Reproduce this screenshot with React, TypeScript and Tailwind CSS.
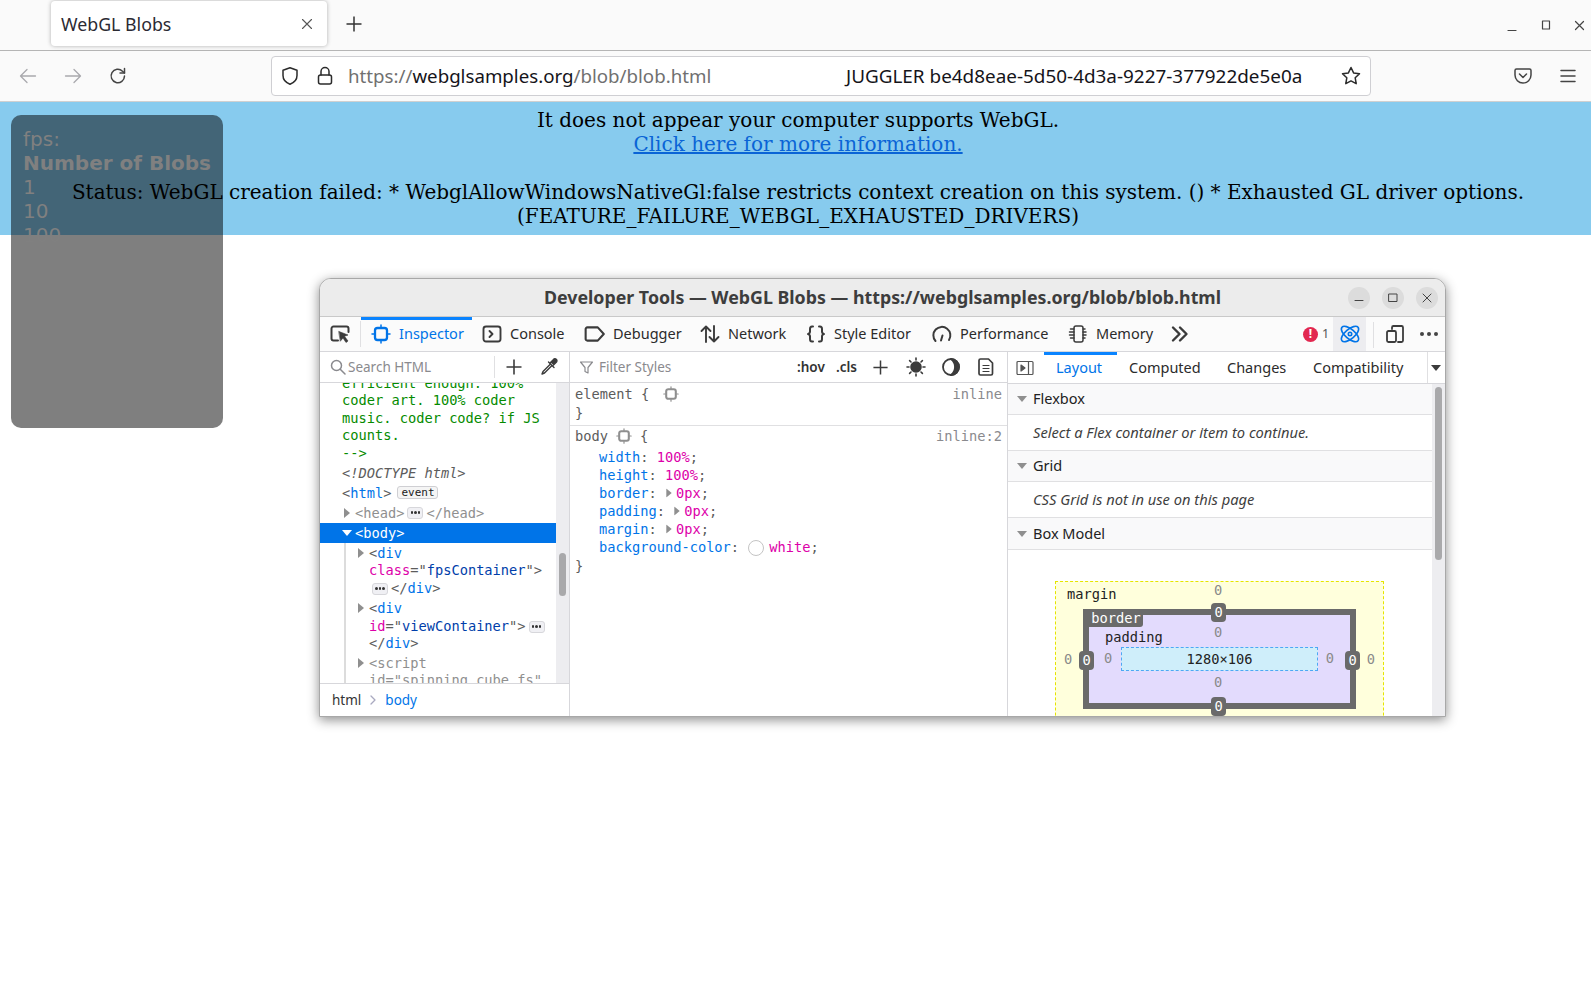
import React from "react";

const S = ({ w = 20, h = 20, vb = "0 0 20 20", children, c = "#3b3b3b", sw = 1.6, cls = "" }: any) => (
  <svg width={w} height={h} viewBox={vb} fill="none" stroke={c} strokeWidth={sw} strokeLinecap="round" strokeLinejoin="round" className={"shrink-0 " + cls}>
    {children}
  </svg>
);

const Cube = ({ c = "#0074e8", size = 20, sw = 2.3 }: any) => (
  <S w={size} h={size} c={c} sw={sw}>
    <rect x="4" y="4" width="12" height="12" rx="2.5" />
    <path d="M10 1v2M10 17v2M1 10h2M17 10h2" strokeWidth="1.5" />
  </S>
);

const Tab = ({ w, icon, label, active }: any) => (
  <div className={"flex items-center h-full pl-[10px] " + w}>
    <div className="w-5 h-5 mr-2 flex items-center justify-center shrink-0">{icon}</div>
    <span className={"text-[14.5px] whitespace-nowrap " + (active ? "text-[#0074e8]" : "text-[#2b2b2b]")}>{label}</span>
  </div>
);

const Arrow = ({ open, c = "#8f8f8f" }: any) => (
  <svg width="10" height="10" viewBox="0 0 10 10" className="shrink-0">
    {open ? <path d="M0 2h10L5 8z" fill={c} /> : <path d="M2 0v10l6-5z" fill={c} />}
  </svg>
);

const Dots = () => (
  <span className="inline-flex items-center justify-center w-[16px] h-[12px] rounded-[3px] bg-[#f0f0f4] border border-[#d7d7db] gap-[1px] align-middle mx-[3px]">
    <i className="w-[2.5px] h-[2.5px] rounded-full bg-[#333]" />
    <i className="w-[2.5px] h-[2.5px] rounded-full bg-[#333]" />
    <i className="w-[2.5px] h-[2.5px] rounded-full bg-[#333]" />
  </span>
);

const P = ({ children }: any) => <span className="text-[#5c5c5c]">{children}</span>;
const T = ({ children }: any) => <span className="text-[#0074e8]">{children}</span>;
const G = ({ children }: any) => <span className="text-[#8f8f8f]">{children}</span>;

const Line = ({ children, cls = "" }: any) => <div className={"h-[17.5px] leading-[17.5px] whitespace-nowrap " + cls}>{children}</div>;

const Comment = ["efficient enough: 100%", "coder art. 100% coder", "music. coder code? if JS", "counts."];

const Decl = ({ name, value, arrow, swatch }: any) => (
  <div className="h-[18.1px] leading-[18.1px] pl-[24px] whitespace-nowrap flex items-center">
    <T>{name}</T>
    <P>:&nbsp;</P>
    {arrow && <span className="mr-[2px] ml-[-1px] scale-[0.9]"><Arrow /></span>}
    {swatch && <span className="w-[16px] h-[16px] rounded-full border border-[#c4c4c4] bg-white mr-[5px] ml-[1px]" />}
    <span className="text-[#dd00a9]">{value}</span>
    <P>;</P>
  </div>
);

const Acc = ({ title, h = "h-[31px]" }: any) => (
  <div className={h + " bg-[#f9f9fa] border-b border-[#e0e0e2] flex items-center pl-[9px]"}>
    <Arrow open />
    <span className="ml-[6px] text-[14.5px] text-[#222]">{title}</span>
  </div>
);

const Note = ({ text }: any) => (
  <div className="h-[36px] border-b border-[#e0e0e2] flex items-center pl-[25px] italic text-[14.7px] text-[#3f3f3f]">{text}</div>
);

const Badge = ({ cls }: any) => (
  <span className={"absolute w-[15px] h-[19px] bg-[#6a6a6a] rounded-[4px] text-white flex items-center justify-center " + cls}>0</span>
);
const Num = ({ cls }: any) => <span className={"absolute text-[#8a8a8a] leading-none " + cls}>0</span>;

export default function App() {
  return (
    <div className="relative w-[1591px] h-[998px] overflow-hidden bg-white font-['Noto_Sans',sans-serif]">
      {/* tab strip */}
      <div className="h-[51px] bg-[#fafafa] border-b border-[#b5b5b5] flex items-start pl-[51px] pt-[1px]">
        <div className="w-[276px] h-[45px] bg-white rounded-[4px] shadow-[0_0_4px_rgba(0,0,0,0.3)] flex items-center pl-[10px] pr-[14px] justify-between">
          <span className="text-[17.8px] text-[#2b2a33] mt-[1px]">WebGL Blobs</span>
          <S w={12} h={12} vb="0 0 12 12" c="#555" sw={1.1}><path d="M1.5 1.5l9 9M10.5 1.5l-9 9" /></S>
        </div>
        <div className="ml-[18px] mt-[14px]">
          <S w={18} h={18} vb="0 0 18 18" c="#333" sw={1.5}><path d="M9 1.5v15M1.5 9h15" strokeLinecap="butt" /></S>
        </div>
        <div className="ml-auto flex items-center h-[48px] pr-[6px] text-[#444]">
          <S w={10} h={10} vb="0 0 10 10" c="#444" sw={1.2} cls="mt-[4px] mr-[24px]"><path d="M1 8.5h8" /></S>
          <S w={10} h={10} vb="0 0 10 10" c="#444" sw={1.2} cls="mr-[23px]"><rect x="1.5" y="1" width="7" height="8" /></S>
          <S w={11} h={11} vb="0 0 11 11" c="#444" sw={1.2}><path d="M1.5 1.5l8 8M9.5 1.5l-8 8" /></S>
        </div>
      </div>

      {/* nav toolbar */}
      <div className="h-[51px] bg-[#fafafa] border-b border-[#d0d0d0] flex items-center relative">
        <div className="flex items-center pl-[19px] gap-[27px]">
          <S w={18} h={18} vb="0 0 18 18" c="#a9a9ad" sw={1.3}><path d="M16.5 9h-15M8 2.5L1.5 9 8 15.5" /></S>
          <S w={18} h={18} vb="0 0 18 18" c="#a9a9ad" sw={1.3}><path d="M1.5 9h15M10 2.5L16.5 9 10 15.5" /></S>
          <S w={18} h={18} vb="0 0 18 18" c="#444" sw={1.5}><path d="M15.5 9a6.7 6.7 0 1 1-2-4.8L15.5 6" /><path d="M15.5 1.5V6H11" /></S>
        </div>
        <div className="absolute left-[271px] top-[5px] w-[1100px] h-[40px] bg-white border border-[#cfcfd3] rounded-[4px] flex items-center pl-[8px]">
          <S w={20} h={20} c="#2b2b2b" sw={1.5}><path d="M10 1.8l7 2.4v5.3c0 4.3-3 7.2-7 8.7-4-1.5-7-4.4-7-8.7V4.2z" /></S>
          <div className="ml-[16px]">
            <S w={18} h={20} vb="0 0 18 20" c="#2b2b2b" sw={1.5}><rect x="2.5" y="9" width="13" height="9" rx="2" /><path d="M5 9V5.5a4 4 0 0 1 8 0V9" /></S>
          </div>
          <span className="ml-[14px] w-[498px] text-[18.7px] text-[#707070] whitespace-nowrap">https://<span className="text-[#15141a]">webglsamples.org</span>/blob/blob.html</span>
          <span className="text-[18.9px] text-[#15141a] whitespace-nowrap">JUGGLER be4d8eae-5d50-4d3a-9227-377922de5e0a</span>
          <div className="absolute right-[9px] top-[9px]">
            <S w={20} h={20} c="#2b2b2b" sw={1.5}><path d="M10 1.5l2.6 5.4 5.9.8-4.3 4.1 1 5.9-5.2-2.8-5.2 2.8 1-5.9L1.5 7.7l5.9-.8z" /></S>
          </div>
        </div>
        <div className="absolute left-[1513px] top-[15px]">
          <S w={20} h={20} c="#444" sw={1.5}><path d="M3.5 3h13a1.5 1.5 0 0 1 1.5 1.5V9c0 4.5-3.6 8-8 8s-8-3.500-8-8V4.500A1.500 1.500 0 0 1 3.500 3z" /><path d="M6.500 8l3.500 3.500L13.500 8" /></S>
        </div>
        <div className="absolute left-[1559px] top-[16px]">
          <S w={18} h={18} vb="0 0 18 18" c="#444" sw={1.5}><path d="M2 3.500h14M2 9h14M2 14.500h14" /></S>
        </div>
      </div>

      {/* page */}
      <div className="relative">
        <div className="bg-[#87cbee] h-[133px] pt-[6px] pl-[5px] text-center text-[20px] leading-[24px] text-black font-['DejaVu_Serif',serif] relative">
          <div>It does not appear your computer supports WebGL.</div>
          <div><a className="text-[#0a64d6] underline">Click here for more information.</a></div>
          <div className="h-[24px]" />
          <div className="relative z-10 whitespace-nowrap">Status: WebGL creation failed: * WebglAllowWindowsNativeGl:false restricts context creation on this system. () * Exhausted GL driver options.</div>
          <div>(FEATURE_FAILURE_WEBGL_EXHAUSTED_DRIVERS)</div>
        </div>
        <div className="absolute left-[11px] top-[13px] w-[212px] h-[313px] rounded-[10px] bg-[rgba(0,0,0,0.5)] pl-[12px] pt-[12px] font-['DejaVu_Sans',sans-serif] text-[20px] leading-[24px] text-[#808080] overflow-hidden">
          <div>fps:</div>
          <div className="font-bold">Number of Blobs</div>
          <div>1</div>
          <div>10</div>
          <div>100</div>
        </div>
      </div>

      {/* devtools window */}
      <div className="absolute left-[319px] top-[278px] w-[1127px] h-[439px] bg-white rounded-t-[12px] border border-[#a8a8a8] shadow-[0_3px_12px_rgba(0,0,0,0.45)] overflow-hidden flex flex-col">
        <div className="h-[38px] bg-[#ececec] border-b border-[#c9c9c9] flex items-center justify-center relative shrink-0">
          <span className="text-[17.8px] font-bold text-[#3d3d3d] whitespace-nowrap">Developer Tools — WebGL Blobs — https://webglsamples.org/blob/blob.html</span>
          <div className="absolute right-[7px] top-[8px] flex gap-[12px]">
            <div className="w-[22px] h-[22px] rounded-full bg-[#dcdcdc] flex items-center justify-center"><S w={10} h={10} vb="0 0 10 10" c="#444" sw={1}><path d="M1 7.500h8" /></S></div>
            <div className="w-[22px] h-[22px] rounded-full bg-[#dcdcdc] flex items-center justify-center"><S w={10} h={10} vb="0 0 10 10" c="#444" sw={1}><rect x="1" y="1" width="8" height="7.500" /></S></div>
            <div className="w-[22px] h-[22px] rounded-full bg-[#dcdcdc] flex items-center justify-center"><S w={10} h={10} vb="0 0 10 10" c="#444" sw={1}><path d="M1 1l8 8M9 1l-8 8" /></S></div>
          </div>
        </div>

        {/* main tabs */}
        <div className="h-[35px] bg-[#fbfbfb] border-b border-[#d7d7db] flex items-center shrink-0 relative">
          <div className="w-[40px] h-full flex items-center justify-center">
            <S w={20} h={20} c="#3b3b3b" sw={2}>
              <path d="M8 16.500H3.500a2 2 0 0 1-2-2v-10a2 2 0 0 1 2-2h13a2 2 0 0 1 2 2V8" />
              <path d="M9 7.500l9 3.500-3.500 1.300L18 17l-2 1.500-3-4.500-2.500 3z" fill="#3b3b3b" strokeWidth="0.6" />
            </S>
          </div>
          <div className="w-px h-[26px] bg-[#e0e0e2]" />
          <div className="relative h-full">
            <div className="absolute left-0 right-0 top-0 h-[3px] bg-[#0a84ff]" />
            <Tab w="w-[111px]" active icon={<Cube />} label="Inspector" />
          </div>
          <Tab w="w-[103px]" label="Console" icon={<S sw={1.9}><rect x="1.500" y="2.500" width="17" height="15" rx="2.500" /><path d="M7.500 7l3 3-3 3" /></S>} />
          <Tab w="w-[115px]" label="Debugger" icon={<S sw={1.9} w={22} h={22}><path d="M3 4h9.500l5.500 6-5.500 6H3A1.500 1.500 0 0 1 1.500 14.500v-9A1.500 1.500 0 0 1 3 4z" /></S>} />
          <Tab w="w-[106px]" label="Network" icon={<S sw={1.9}><path d="M6 18V2.500M1.500 7L6 2.500 10.500 7M14 2v15.500M9.500 13l4.500 4.500 4.500-4.500" /></S>} />
          <Tab w="w-[126px]" label="Style Editor" icon={<S sw={2}><path d="M7 2.500H6C4.500 2.500 4 3.300 4 5v2.500C4 9 3.500 9.700 2 10c1.500.3 2 1 2 2.500V15c0 1.700.5 2.500 2 2.500h1M13 2.500h1c1.500 0 2 .8 2 2.500v2.500c0 1.500.5 2.200 2 2.500-1.500.3-2 1-2 2.500V15c0 1.700-.5 2.500-2 2.500h-1" /></S>} />
          <Tab w="w-[136px]" label="Performance" icon={<S sw={2}><path d="M3.500 17A8.500 8.500 0 1 1 17 16" /><path d="M10.500 11.500l-1.500 5" /></S>} />
          <Tab w="w-[105px]" label="Memory" icon={<S sw={1.5}><rect x="6" y="2" width="9" height="16" rx="2" /><path d="M6 5H2.500M6 8H1.500M6 11H1.500M6 14H2.500M15 5h2M15 8h3M15 11h3M15 14h2" /></S>} />
          <div className="ml-[7px]">
            <S w={20} h={20} c="#3b3b3b" sw={2.4}><path d="M3 3.500l6.500 6.500L3 16.500M10 3.500l6.500 6.500-6.500 6.500" /></S>
          </div>
          <div className="absolute left-[983px] top-0 h-full flex items-center">
            <span className="w-[15px] h-[15px] rounded-full bg-[#e22850] text-white text-[12px] font-bold flex items-center justify-center leading-none">!</span>
            <span className="ml-[4px] text-[12.5px] text-[#555]">1</span>
          </div>
          <div className="absolute left-[1013px] top-0 w-[33px] h-full bg-[#ededf0] flex items-center justify-center">
            <S w={22} h={22} vb="0 0 22 22" c="#0074e8" sw={1.6}>
              <ellipse cx="11" cy="11" rx="10.500" ry="4.800" transform="rotate(40 11 11)" />
              <ellipse cx="11" cy="11" rx="10.500" ry="4.800" transform="rotate(-40 11 11)" />
              <circle cx="11" cy="11" r="1.700" />
            </S>
          </div>
          <div className="absolute left-[1053px] top-[5px] w-px h-[26px] bg-[#e0e0e2]" />
          <div className="absolute left-[1065px] top-[7px]">
            <S w={20} h={20} c="#3b3b3b" sw={1.8}>
              <path d="M7 5V3.500A1.500 1.500 0 0 1 8.500 2h8A1.500 1.500 0 0 1 18 3.500v13a1.500 1.500 0 0 1-1.500 1.500H13" />
              <rect x="2" y="7" width="9" height="11" rx="1.500" />
            </S>
          </div>
          <div className="absolute left-[1100px] top-[15px] flex gap-[3px]">
            <i className="w-[4px] h-[4px] rounded-full bg-[#444]" />
            <i className="w-[4px] h-[4px] rounded-full bg-[#444]" />
            <i className="w-[4px] h-[4px] rounded-full bg-[#444]" />
          </div>
        </div>

        <div className="flex flex-1 min-h-0">
          {/* inspector */}
          <div className="w-[250px] border-r border-[#d7d7db] flex flex-col shrink-0">
            <div className="h-[31px] bg-white border-b border-[#d7d7db] flex items-center shrink-0">
              <div className="ml-[10px]">
                <S w={16} h={16} vb="0 0 16 16" c="#8a8a8e" sw={1.5}><circle cx="6.500" cy="6.500" r="5" /><path d="M10.500 10.500L15 15" /></S>
              </div>
              <span className="ml-[2px] text-[13.5px] text-[#8a8a8e] w-[146px]">Search HTML</span>
              <div className="w-px h-[22px] bg-[#e0e0e2]" />
              <div className="ml-[10px]">
                <S w={18} h={18} vb="0 0 18 18" c="#3b3b3b" sw={1.6}><path d="M9 1.500v15M1.500 9h15" strokeLinecap="butt" /></S>
              </div>
              <div className="ml-[17px]">
                <S w={18} h={18} vb="0 0 18 18" c="#3b3b3b" sw={1.4}>
                  <path d="M10.500 4.500l3-3a1.700 1.700 0 0 1 3 2.500l-3 3M8.500 4l5.500 5.500" fill="#3b3b3b" />
                  <path d="M10.500 6L3 13.500 2 16l2.500-1L12 7.500" />
                </S>
              </div>
            </div>
            <div className="flex-1 min-h-0 flex">
              <div className="flex-1 min-w-0 overflow-hidden font-['DejaVu_Sans_Mono',monospace] text-[13.7px] text-[#5c5c5c]">
                <div className="mt-[-8.5px]">
                  <div className="pl-[22px] text-[#058b00]">
                    {Comment.map((c) => <Line key={c}>{c}</Line>)}
                    <div className="h-[18px] leading-[17.5px]">--&gt;</div>
                  </div>
                  <div className="h-[20px] leading-[20px] pl-[22px] italic">&lt;!DOCTYPE html&gt;</div>
                  <div className="h-[20px] leading-[20px] pl-[22px] flex items-center">
                    <P>&lt;</P><T>html</T><P>&gt;</P>
                    <span className="ml-[6px] h-[13px] w-[41px] rounded-[3px] bg-[#f5f5f5] border border-[#cfcfd3] text-[11px] leading-[11px] text-[#222] flex items-center justify-center">event</span>
                  </div>
                  <div className="h-[20px] leading-[20px] flex items-center pl-[22px]">
                    <span className="mr-[3px]"><Arrow /></span>
                    <G>&lt;head&gt;</G><Dots /><G>&lt;/head&gt;</G>
                  </div>
                  <div className="h-[20px] leading-[20px] flex items-center pl-[22px] bg-[#0074e8] text-white">
                    <span className="mr-[3px]"><Arrow open c="#fff" /></span>
                    &lt;body&gt;
                  </div>
                  <div className="ml-[24px] border-l-[2px] border-[#dcdcdc] pl-[10px]">
                    <div className="pt-[2px] pb-[1px] relative">
                      <span className="absolute left-[0px] top-[5px]"><Arrow /></span>
                      <div className="pl-[13px]">
                        <Line><P>&lt;</P><T>div</T></Line>
                        <Line><span className="text-[#dd00a9]">class</span><P>="</P><span className="text-[#003eaa]">fpsContainer</span><P>"&gt;</P></Line>
                        <Line><Dots /><P>&lt;/</P><T>div</T><P>&gt;</P></Line>
                      </div>
                    </div>
                    <div className="pt-[2px] pb-[1px] relative">
                      <span className="absolute left-[0px] top-[5px]"><Arrow /></span>
                      <div className="pl-[13px]">
                        <Line><P>&lt;</P><T>div</T></Line>
                        <Line><span className="text-[#dd00a9]">id</span><P>="</P><span className="text-[#003eaa]">viewContainer</span><P>"&gt;</P><Dots /></Line>
                        <Line><P>&lt;/</P><T>div</T><P>&gt;</P></Line>
                      </div>
                    </div>
                    <div className="pt-[1px] pb-[1px] relative">
                      <span className="absolute left-[0px] top-[4px]"><Arrow /></span>
                      <div className="pl-[13px] text-[#8f8f8f]">
                        <Line>&lt;script</Line>
                        <Line>id="spinning_cube_fs"</Line>
                      </div>
                    </div>
                  </div>
                </div>
              </div>
              <div className="w-[13px] bg-[#ededf0] shrink-0 flex justify-center">
                <div className="w-[7px] h-[43px] mt-[170px] rounded-full bg-[#a9a9ab]" />
              </div>
            </div>
            <div className="h-[33px] border-t border-[#d7d7db] bg-white flex items-center pl-[12px] text-[13.5px] shrink-0">
              <span className="text-[#333]">html</span>
              <div className="mx-[8px]"><S w={8} h={10} vb="0 0 8 10" c="#a9a9c0" sw={1.3}><path d="M2 1l4 4-4 4" /></S></div>
              <span className="text-[#0074e8]">body</span>
            </div>
          </div>

          {/* rules */}
          <div className="w-[438px] border-r border-[#d7d7db] flex flex-col shrink-0">
            <div className="h-[31px] border-b border-[#d7d7db] flex items-center shrink-0 relative">
              <div className="ml-[9px]">
                <S w={15} h={15} vb="0 0 15 15" c="#8a8a8e" sw={1.2}><path d="M1.500 2h12L9 7.500V13l-3-1.500v-4z" /></S>
              </div>
              <span className="ml-[5px] text-[13.5px] text-[#8a8a8e]">Filter Styles</span>
              <span className="absolute left-[227px] text-[13.5px] font-semibold text-[#333]">:hov</span>
              <span className="absolute left-[266px] text-[13.5px] font-semibold text-[#333]">.cls</span>
              <div className="absolute left-[302px] top-[7px]"><S w={17} h={17} vb="0 0 18 18" c="#3b3b3b" sw={1.6}><path d="M9 1.500v15M1.500 9h15" strokeLinecap="butt" /></S></div>
              <div className="absolute left-[336px] top-[5px]">
                <S w={20} h={20} c="#3b3b3b" sw={1.6}>
                  <circle cx="10" cy="10" r="5" fill="#3b3b3b" />
                  <path d="M10 1v2M10 17v2M1 10h2M17 10h2M3.600 3.600L5 5M15 15l1.400 1.400M3.600 16.400L5 15M15 5l1.400-1.400" />
                </S>
              </div>
              <div className="absolute left-[371px] top-[5px]">
                <S w={20} h={20} c="#3b3b3b" sw={1.8}>
                  <circle cx="10" cy="10" r="8" />
                  <path d="M10 2a8 8 0 0 1 0 16 10 10 0 0 0 0-16z" fill="#3b3b3b" />
                </S>
              </div>
              <div className="absolute left-[406px] top-[5px]">
                <S w={20} h={20} c="#3b3b3b" sw={1.7}>
                  <path d="M4.500 2h8l4 4v10.500a1.500 1.500 0 0 1-1.500 1.500H4.500A1.500 1.500 0 0 1 3 16.500v-13A1.500 1.500 0 0 1 4.500 2z" />
                  <path d="M7 8.500h6M7 11.500h6M7 14.500h6" strokeWidth="1.200" />
                </S>
              </div>
            </div>
            <div className="flex-1 font-['DejaVu_Sans_Mono',monospace] text-[13.7px] text-[#5c5c5c] overflow-hidden">
              <div className="h-[43px] border-b border-[#e0e0e2] pl-[5px] pr-[5px] pt-[2px] relative">
                <div className="h-[18.500px] leading-[18.500px] flex items-center">
                  element {"{"}
                  <span className="ml-[14px]"><Cube c="#8f8f8f" size={16} sw={2.6} /></span>
                  <span className="ml-auto text-[#8a8a8e]">inline</span>
                </div>
                <div className="h-[18.500px] leading-[18.500px]">{"}"}</div>
              </div>
              <div className="pl-[5px] pr-[5px]">
                <div className="h-[20px] leading-[20px] flex items-center mb-[2px]">
                  body<span className="mx-[8px]"><Cube c="#8f8f8f" size={16} sw={2.6} /></span>{"{"}
                  <span className="ml-auto text-[#8a8a8e]">inline:2</span>
                </div>
                <Decl name="width" value="100%" />
                <Decl name="height" value="100%" />
                <Decl name="border" value="0px" arrow />
                <Decl name="padding" value="0px" arrow />
                <Decl name="margin" value="0px" arrow />
                <Decl name="background-color" value="white" swatch />
                <div className="h-[18px] leading-[18px]">{"}"}</div>
              </div>
            </div>
          </div>

          {/* sidebar */}
          <div className="flex-1 min-w-0 flex flex-col">
            <div className="h-[32px] border-b border-[#d7d7db] flex items-center shrink-0 relative text-[14.5px] text-[#2b2b2b]">
              <div className="ml-[8px]">
                <S w={18} h={16} vb="0 0 18 16" c="#555" sw={1.2}><rect x="1" y="1.500" width="16" height="13" rx="1" /><path d="M12.500 1.500v13" /><path d="M5 5l4 3-4 3z" fill="#555" /></S>
              </div>
              <div className="absolute left-[36px] top-0 w-[73px] h-[3px] bg-[#0a84ff]" />
              <span className="absolute left-[48px] text-[#0074e8]">Layout</span>
              <span className="absolute left-[121px]">Computed</span>
              <span className="absolute left-[219px]">Changes</span>
              <span className="absolute left-[305px]">Compatibility</span>
              <div className="absolute left-[419px] top-0 h-full w-px bg-[#e0e0e2]" />
              <svg className="absolute left-[423px] top-[13px]" width="10" height="6" viewBox="0 0 10 6"><path d="M0 0h10L5 6z" fill="#3b3b3b" /></svg>
            </div>
            <div className="flex-1 min-h-0 flex">
              <div className="flex-1 min-w-0 overflow-hidden">
                <Acc title="Flexbox" />
                <Note text="Select a Flex container or item to continue." />
                <Acc title="Grid" />
                <Note text="CSS Grid is not in use on this page" />
                <Acc title="Box Model" h="h-[32px]" />
                <div className="ml-[47px] mt-[31px] w-[329px] h-[170px] bg-[#ffffdc] border border-dashed border-[#e5e500] relative font-['DejaVu_Sans_Mono',monospace] text-[13.7px] text-[#222]">
                  <span className="absolute left-[11px] top-[2px]">margin</span>
                  <Num cls="left-[158px] top-[2px]" />
                  <Num cls="left-[8px] top-[71px]" />
                  <Num cls="right-[8px] top-[71px]" />
                  <div className="absolute left-[27px] top-[27px] w-[273px] h-[100px] border-[6px] border-[#6a6a6a] bg-[#e3dbfd]">
                    <span className="absolute left-0 top-0 w-[54px] h-[12px] bg-[#6a6a6a] rounded-br-[3px] text-white leading-[6px] text-center">border</span>
                    <span className="absolute left-[16px] top-[12px]">padding</span>
                    <Num cls="left-[125px] top-[11px]" />
                    <Num cls="left-[125px] top-[61px]" />
                    <Num cls="left-[15px] top-[37px]" />
                    <Num cls="right-[16px] top-[37px]" />
                    <div className="absolute left-[32px] top-[32px] w-[197px] h-[24px] bg-[#cfeefa] border border-dashed border-[#4ea7f5] flex items-center justify-center">1280×106</div>
                  </div>
                  <Badge cls="left-[155px] top-[21px]" />
                  <Badge cls="left-[155px] top-[115px]" />
                  <Badge cls="left-[23px] top-[69px]" />
                  <Badge cls="left-[289px] top-[69px]" />
                </div>
              </div>
              <div className="w-[13px] bg-[#ededf0] shrink-0 flex justify-center">
                <div className="w-[7px] h-[173px] mt-[3px] rounded-full bg-[#a9a9ab]" />
              </div>
            </div>
          </div>
        </div>
      </div>
    </div>
  );
}
